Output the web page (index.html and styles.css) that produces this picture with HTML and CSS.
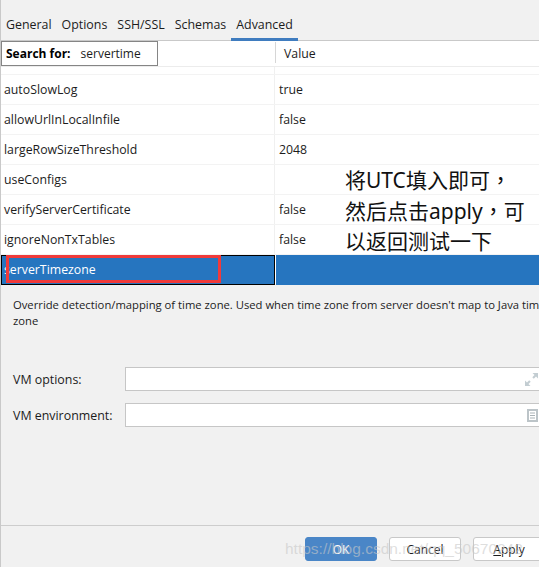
FILE: index.html
```html
<!DOCTYPE html>
<html lang="en">
<head>
    <meta charset="UTF-8">
    <meta name="viewport" content="width=device-width, initial-scale=1.0">
    <title>Advanced</title>
    <link rel="stylesheet" href="styles.css">
</head>
<body>
    <div class="window">
        <nav class="tabs">
            <span class="tab">General</span>
            <span class="tab">Options</span>
            <span class="tab">SSH/SSL</span>
            <span class="tab">Schemas</span>
            <span class="tab active">Advanced</span>
        </nav>

        <div class="table">
            <div class="table-head">
                <div class="search-box"><b>Search for:</b><span>servertime</span></div>
                <div class="head-name"></div>
                <div class="head-value">Value</div>
            </div>
            <div class="row-stub"><div class="cell-name"></div><div class="cell-value"></div></div>
            <div class="row"><div class="cell-name">autoSlowLog</div><div class="cell-value">true</div></div>
            <div class="row"><div class="cell-name">allowUrlInLocalInfile</div><div class="cell-value">false</div></div>
            <div class="row"><div class="cell-name">largeRowSizeThreshold</div><div class="cell-value">2048</div></div>
            <div class="row"><div class="cell-name">useConfigs</div><div class="cell-value"></div></div>
            <div class="row"><div class="cell-name">verifyServerCertificate</div><div class="cell-value">false</div></div>
            <div class="row"><div class="cell-name">ignoreNonTxTables</div><div class="cell-value">false</div></div>
            <div class="row selected"><div class="cell-name">serverTimezone</div><div class="cell-value"></div></div>
            <div class="red-box"></div>
            <div class="note">将UTC填入即可<span class="comma">，</span><br>然后点击apply<span class="comma">，</span>可<br>以返回测试一下</div>
        </div>

        <p class="description">Override detection/mapping of time zone. Used when time zone from server doesn't map to Java time<br>zone</p>

        <div class="vm-form">
            <div class="vm-row">
                <label>VM options:</label>
                <div class="vm-input">
                    <svg width="13" height="13" viewBox="0 0 13 13">
                        <path d="M7.5 0H13v5.5l-2-2-2.2 2.2-1.5-1.5L9.5 2zM5.5 13H0V7.5l2 2 2.2-2.2 1.5 1.5L3.5 11z" fill="#c3cdd2"/>
                    </svg>
                </div>
            </div>
            <div class="vm-row">
                <label>VM environment:</label>
                <div class="vm-input">
                    <svg width="11" height="13" viewBox="0 0 11 13">
                        <rect width="11" height="13" fill="#bcc4c8"/>
                        <rect x="2" y="2" width="7" height="9" fill="#fff"/>
                        <path d="M3 4h5M3 6.5h5M3 9h5" stroke="#a9b2b6" stroke-width="1"/>
                    </svg>
                </div>
            </div>
        </div>

        <footer class="footer">
            <button class="btn primary">OK</button>
            <button class="btn">Cancel</button>
            <button class="btn"><u>A</u>pply</button>
        </footer>
        <div class="watermark">https://blog.csdn.net/qq_50670242</div>
    </div>
</body>
</html>
```

FILE: styles.css
```css
html, body {
    margin: 0;
    height: 100%;
    overflow: hidden;
}
body {
    font-family: "Open Sans", "Noto Sans", sans-serif;
    font-size: 11.5px;
    color: #1c1c1c;
    background-color: #f1f1f1;
}
.window {
    position: relative;
    display: flex;
    flex-direction: column;
    width: 539px;
    height: 567px;
    box-sizing: border-box;
    border-left: 1px solid #c9c9c9;
    overflow: hidden;
}
.tabs {
    display: flex;
    flex: none;
    height: 41px;
    box-sizing: border-box;
    border-bottom: 1px solid #c9c9c9;
}
.tab {
    height: 41px;
    box-sizing: border-box;
    padding: 17px 5px 0;
    line-height: 16px;
    font-size: 12.4px;
}
.tab.active {
    border-bottom: 3px solid #3f7cbf;
}
.table {
    position: relative;
    flex: none;
    height: 243px;
    background-color: #fff;
    font-size: 12.3px;
}
.table-head {
    display: flex;
    height: 25px;
    border-bottom: 1px solid #ececec;
}
.search-box {
    display: flex;
    align-items: center;
    gap: 10px;
    width: 157px;
    box-sizing: border-box;
    padding-left: 4px;
    font-size: 12px;
    border: 1px solid #858585;
    background-color: #fff;
    flex: none;
}
.search-box b {
    color: #000;
}
.head-name {
    width: 117px;
    border-right: 1px solid #d6d6d6;
    flex: none;
    margin: 1px 0 3px;
}
.head-value {
    padding: 4px 0 0 8px;
}
.row-stub {
    display: flex;
    height: 7px;
    border-bottom: 1px solid #f3f3f3;
}
.row {
    display: flex;
    height: 29px;
    line-height: 29px;
    border-bottom: 1px solid #f3f3f3;
}
.cell-name {
    width: 274px;
    flex: none;
    box-sizing: border-box;
    padding-left: 3px;
    border-right: 1px solid #f0f0f0;
}
.cell-value {
    flex: 1;
    padding-left: 4px;
}
.row.selected {
    height: 30px;
    line-height: 28px;
    border-bottom: 0;
    color: #fff;
}
.row.selected .cell-name {
    padding-left: 2px;
    background-color: #2675bf;
    border: 1px solid #000;
}
.row.selected .cell-value {
    background-color: #2675bf;
    margin-left: 1px;
}
.red-box {
    position: absolute;
    left: 5px;
    top: 214px;
    width: 215px;
    height: 28px;
    box-sizing: border-box;
    border: 3px solid #f03a3a;
}
.note {
    position: absolute;
    left: 344px;
    top: 123px;
    font-family: "Noto Sans", "Noto Sans CJK SC", sans-serif;
    font-size: 21px;
    line-height: 30px;
    color: #111;
    white-space: nowrap;
}
.comma {
    font-family: "Noto Sans CJK TC", sans-serif;
}
.description {
    flex: none;
    width: 600px;
    margin: 0;
    padding: 13px 12px 0;
    font-size: 11.25px;
    line-height: 16px;
    box-sizing: border-box;
}
.vm-form {
    display: flex;
    flex-direction: column;
    gap: 12px;
    margin-top: 38px;
    padding-left: 12px;
}
.vm-row {
    display: flex;
    align-items: center;
}
.vm-row label {
    width: 112px;
    flex: none;
    font-size: 12.4px;
}
.vm-input {
    display: flex;
    align-items: center;
    justify-content: flex-end;
    width: 414px;
    height: 24px;
    flex: none;
    box-sizing: border-box;
    padding-right: 1px;
    background-color: #fff;
    border: 1px solid #c6c6c6;
    border-right: 0;
}
.footer {
    display: flex;
    gap: 12px;
    margin-top: auto;
    height: 42px;
    box-sizing: border-box;
    padding: 11px 0 0 304px;
    border-top: 1px solid #cdcdcd;
    flex: none;
}
.btn {
    width: 72px;
    height: 24px;
    flex: none;
    padding: 0;
    font-family: inherit;
    font-size: 12px;
    color: #1c1c1c;
    background-color: #fff;
    border: 1px solid #c8c8c8;
    border-radius: 3px;
}
.btn.primary {
    color: #fff;
    background-color: #4a86c7;
    border-color: #4a86c7;
}
.watermark {
    position: absolute;
    left: 284px;
    top: 538px;
    font-family: "Liberation Sans", sans-serif;
    font-size: 15.5px;
    line-height: 22px;
    color: rgba(200, 200, 200, 0.6);
    white-space: nowrap;
}
```
